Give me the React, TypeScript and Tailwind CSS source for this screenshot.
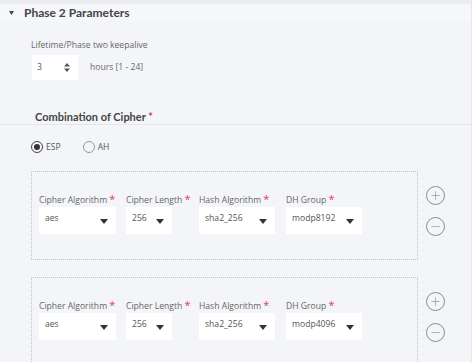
import { Plus, Minus } from 'lucide-react';

const body = { fontFamily: '"Open Sans", "Liberation Sans", sans-serif' };
const head = { fontFamily: 'Lato, "Open Sans", sans-serif' };

function Caret() {
  return (
    <svg width="8" height="5" viewBox="0 0 8 5" className="shrink-0">
      <path d="M0 0h8L4 5z" fill="#333" />
    </svg>
  );
}

function Field({ label, value, width, className = '' }: { label: string; value: string; width: string; className?: string }) {
  return (
    <div className={`flex flex-col shrink-0 ${width} ${className}`}>
      <div className="h-[14px] text-[8.6px] leading-[14px] text-[#666] whitespace-nowrap">
        {label} <span className="text-[#e0404a] text-[11px]">*</span>
      </div>
      <div className="mt-[1px] h-[27px] w-full bg-white flex items-start justify-between pl-[6px] pr-[8px] pt-[4px]">
        <span className="text-[8.6px] leading-[14px] text-[#555]">{value}</span>
        <span className="pt-[8px]"><Caret /></span>
      </div>
    </div>
  );
}

function CipherRow({ dh }: { dh: string }) {
  return (
    <div className="flex items-start">
      <div className="w-[387px] h-[89px] shrink-0 border border-dotted border-[#bfc1c6] pt-[20px] pl-[7px] flex">
        <Field label="Cipher Algorithm" value="aes" width="w-[77px]" />
        <Field label="Cipher Length" value="256" width="w-[46px]" className="ml-[10px]" />
        <Field label="Hash Algorithm" value="sha2_256" width="w-[76px]" className="ml-[27px]" />
        <Field label="DH Group" value={dh} width="w-[76px]" className="ml-[11px]" />
      </div>
      <div className="ml-[8px] pt-[15px] flex flex-col gap-[12px] text-[#8a8c90]">
        <div className="w-[19px] h-[19px] rounded-full border border-[#8a8c90] flex items-center justify-center">
          <Plus size={13} strokeWidth={1.2} />
        </div>
        <div className="w-[19px] h-[19px] rounded-full border border-[#8a8c90] flex items-center justify-center">
          <Minus size={13} strokeWidth={1.2} />
        </div>
      </div>
    </div>
  );
}

export default function App() {
  return (
    <div className="w-[474px] h-[362px] overflow-hidden bg-white" style={body}>
      <div className="w-[472px] h-[362px] bg-[#f4f5f9] border-r border-[#e6e7ea]">
        <div className="h-[4px] bg-[#ebecef]" />
        <div className="h-[17px] flex items-center pl-[9px] bg-[#f6f7fa]">
          <svg width="5" height="4" viewBox="0 0 5 4">
            <path d="M0 0h5L2.5 4z" fill="#444" />
          </svg>
          <span className="ml-[10px] text-[12px] font-bold text-[#444]" style={head}>
            Phase 2 Parameters
          </span>
        </div>
        <div className="pl-[31px] pt-[17px]">
          <div className="text-[8.6px] leading-[14px] text-[#666]">Lifetime/Phase two keepalive</div>
          <div className="mt-[3px] flex items-center">
            <div className="ml-[1px] w-[46px] h-[25px] shrink-0 bg-white flex items-center justify-between pl-[5px] pr-[8px]">
              <span className="text-[8.6px] text-[#555]">3</span>
              <svg width="6" height="9" viewBox="0 0 6 9">
                <path d="M0 3.5h6L3 0zM0 5.5h6L3 9z" fill="#555" />
              </svg>
            </div>
            <span className="ml-[12px] text-[8.6px] text-[#666]">hours [1 - 24]</span>
          </div>
        </div>
        <div className="mt-[31px] pl-[35px] text-[11px] font-bold text-[#444] leading-[12px]" style={head}>
          Combination of Cipher <span className="text-[#e0404a]">*</span>
        </div>
        <div className="mt-[1px] h-px bg-[#e4e5e9]" />
        <div className="mt-[16px] pl-[31px] flex items-center text-[8.6px] text-[#555]">
          <span className="w-[12px] h-[12px] rounded-full border border-[#444] flex items-center justify-center">
            <span className="w-[6px] h-[6px] rounded-full bg-[#333]" />
          </span>
          <span className="ml-[3px]">ESP</span>
          <span className="ml-[22px] w-[12px] h-[12px] rounded-full border border-[#999]" />
          <span className="ml-[3px]">AH</span>
        </div>
        <div className="mt-[17px] pl-[31px] flex flex-col gap-[17px]">
          <CipherRow dh="modp8192" />
          <CipherRow dh="modp4096" />
        </div>
      </div>
    </div>
  );
}
